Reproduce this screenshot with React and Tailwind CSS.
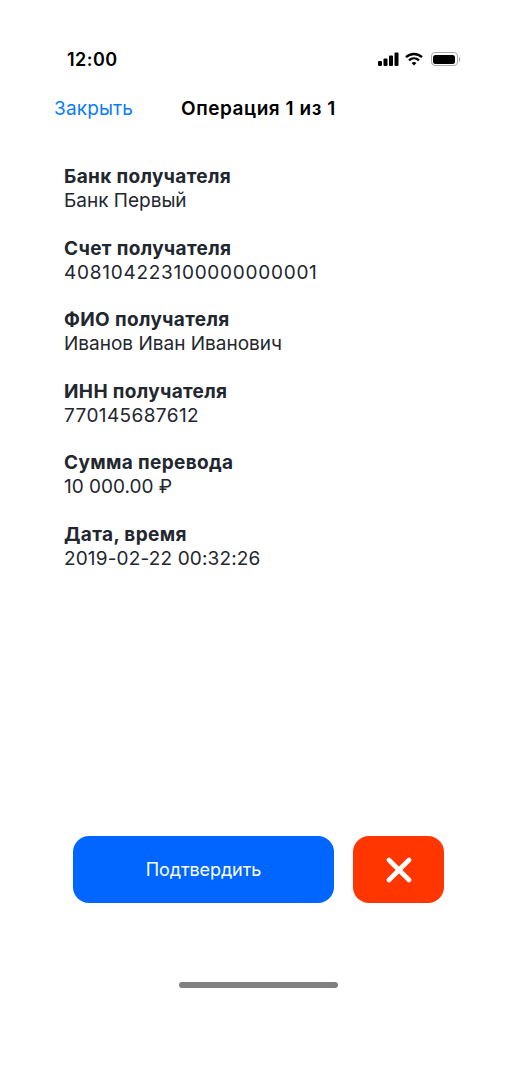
const rows = [
  { label: "Банк получателя", value: "Банк Первый" },
  { label: "Счет получателя", value: "408104223100000000001", spacing: "tracking-[0.73px]" },
  { label: "ФИО получателя", value: "Иванов Иван Иванович" },
  { label: "ИНН получателя", value: "770145687612", spacing: "tracking-[0.4px]" },
  { label: "Сумма перевода", value: "10 000.00 ₽" },
  { label: "Дата, время", value: "2019-02-22 00:32:26", spacing: "tracking-[0.15px]" },
];

const StatusIcons = () => (
  <div className="flex items-center gap-[6px]">
    {/* signal */}
    <svg width="21" height="14" viewBox="0 0 21 14" fill="#000">
      <rect x="0" y="9" width="4" height="5" rx="1" />
      <rect x="5.5" y="6.5" width="4" height="7.5" rx="1" />
      <rect x="11" y="3.5" width="4" height="10.5" rx="1" />
      <rect x="16.5" y="0.5" width="4" height="13.5" rx="1" />
    </svg>
    {/* wifi */}
    <svg width="18" height="14" viewBox="0 0 18 14" fill="none" stroke="#000" strokeWidth="2.3">
      <path d="M1 5.2C5.5 0.9 12.5 0.9 17 5.2" />
      <path d="M4 8.3C6.9 5.6 11.1 5.6 14 8.3" />
      <path d="M9 13.4L6.6 10.9C8 9.7 10 9.7 11.4 10.9Z" fill="#000" stroke="none" />
    </svg>
    {/* battery */}
    <div className="flex items-center ml-[2px]">
      <div className="w-[27px] h-[14px] rounded-[4px] border border-[#a8a8a8] p-[1.5px]">
        <div className="w-full h-full rounded-[2.5px] bg-black" />
      </div>
      <div className="w-[1.5px] h-[5px] ml-[1px] rounded-r-sm bg-[#a8a8a8]" />
    </div>
  </div>
);

export default function App() {
  return (
    <div className="w-[515px] h-[1080px] bg-white flex flex-col font-['Inter',sans-serif]">
      {/* status bar */}
      <div className="h-[18px] mt-[50px] pl-[67px] pr-[55px] flex items-center justify-between">
        <span className="pt-[1px] text-[18px] leading-[18px] font-semibold tracking-[0.45px] text-black">12:00</span>
        <StatusIcons />
      </div>

      {/* nav */}
      <div className="h-[24px] mt-[29px] pl-[54px] flex items-center">
        <span className="w-[127px] text-[19px] leading-[24px] tracking-[0.15px] text-[#0a7aff]">Закрыть</span>
        <span className="text-[19px] leading-[24px] font-semibold tracking-[0.55px] text-black">Операция 1 из 1</span>
      </div>

      {/* details */}
      <div className="mt-[44px] pl-[64px] flex flex-col gap-[23.5px] text-[#22262e]">
        {rows.map((row, i) => (
          <div key={i} className="flex flex-col">
            <span className="text-[19px] leading-[24px] font-bold tracking-[0.35px]">{row.label}</span>
            <span className={`text-[19px] leading-[24px] ${row.spacing || ""}`}>{row.value}</span>
          </div>
        ))}
      </div>

      {/* actions */}
      <div className="mt-auto pl-[73px] flex gap-[19px]">
        <button className="w-[261px] h-[67px] rounded-[16px] bg-[#0066ff] text-white text-[18px] tracking-[-0.1px]">
          Подтвердить
        </button>
        <button className="w-[91px] h-[67px] rounded-[16px] bg-[#ff3600] flex items-center justify-center">
          <svg width="26" height="26" viewBox="0 0 26 26" stroke="#fff" strokeWidth="4.6" strokeLinecap="round">
            <path d="M3 3L23 23M23 3L3 23" />
          </svg>
        </button>
      </div>

      {/* home indicator */}
      <div className="mt-[79px] mb-[92px] ml-[179px] w-[159px] h-[6px] rounded-full bg-[#808080]" />
    </div>
  );
}
